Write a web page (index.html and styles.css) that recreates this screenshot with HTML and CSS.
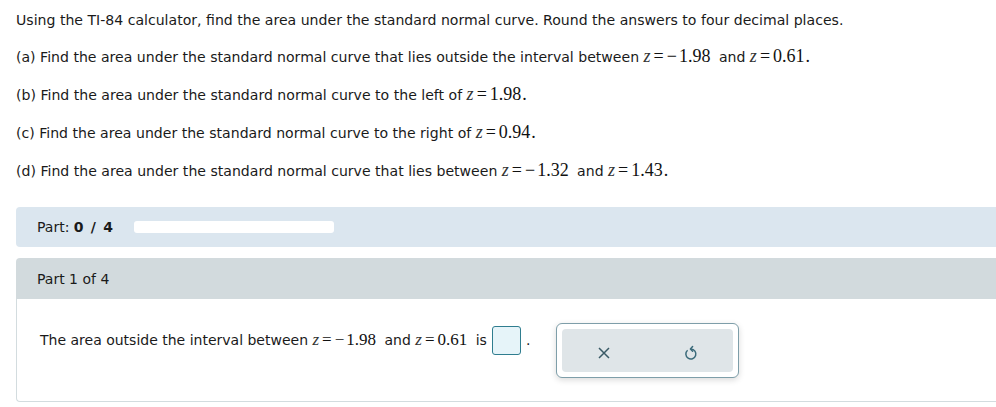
FILE: index.html
```html
<!DOCTYPE html>
<html>
<head>
<meta charset="utf-8">
<link rel="stylesheet" href="styles.css">
</head>
<body>
<div class="page">
  <div class="question">
    <p class="q-line first">Using the TI-84 calculator, find the area under the standard normal curve. Round the answers to four decimal places.</p>
    <p class="q-line">(a) Find the area under the standard normal curve that lies outside the interval between <span class="m sp"><i>z</i><span class="eq">=</span><span class="neg">−</span>1.98</span> and <span class="m"><i>z</i><span class="eq">=</span>0.61</span><span class="m end">.</span></p>
    <p class="q-line">(b) Find the area under the standard normal curve to the left of <span class="m"><i>z</i><span class="eq">=</span>1.98</span><span class="m end">.</span></p>
    <p class="q-line">(c) Find the area under the standard normal curve to the right of <span class="m"><i>z</i><span class="eq">=</span>0.94</span><span class="m end">.</span></p>
    <p class="q-line">(d) Find the area under the standard normal curve that lies between <span class="m sp"><i>z</i><span class="eq">=</span><span class="neg">−</span>1.32</span> and <span class="m"><i>z</i><span class="eq">=</span>1.43</span><span class="m end">.</span></p>
  </div>

  <div class="part-bar">
    <span class="part-label">Part: <b>0 / 4</b></span>
    <div class="progress"></div>
  </div>

  <div class="part-card">
    <div class="part-head">Part 1 of 4</div>
    <div class="part-body">
      <div class="answer-line">
        <span>The area outside the interval between <span class="m sp"><i>z</i><span class="eq">=</span><span class="neg">−</span>1.98</span> and <span class="m sp"><i>z</i><span class="eq">=</span>0.61</span> is</span>
        <span class="input-box"></span>
        <span class="dot">.</span>
      </div>
      <div class="tools">
        <div class="tools-inner">
          <svg class="ico" width="14" height="14" viewBox="0 0 14 14"><path d="M2 2 L12 12 M12 2 L2 12" stroke="#3a5a66" stroke-width="1.5" fill="none"/></svg>
          <svg class="ico" width="16" height="16" viewBox="0 0 16 16"><path d="M4.6 5.2 A5 5 0 1 0 8 4" stroke="#3a6a7a" stroke-width="1.5" fill="none"/><path d="M9.6 1.6 L7.4 4 L9.6 6.2" stroke="#3a6a7a" stroke-width="1.5" fill="none" stroke-linecap="round" stroke-linejoin="round"/></svg>
        </div>
      </div>
    </div>
  </div>
</div>
</body>
</html>
```

FILE: styles.css
```css
html, body {
  margin: 0;
  padding: 0;
  background: #fff;
}
body {
  font-family: "DejaVu Sans", Verdana, sans-serif;
  font-size: 14px;
  color: #1a1a1a;
  width: 996px;
  overflow: hidden;
}
.page {
  padding: 11px 0 0 16px;
}
.question {
  display: flex;
  flex-direction: column;
  font-size: 14.08px;
}
.q-line {
  margin: 0;
  height: 38px;
  line-height: 18px;
}
.q-line.first {
  height: 36px;
}
.m {
  font-family: "Liberation Serif", "Times New Roman", serif;
  font-size: 17px;
  color: #111;
}
.question .m {
  font-size: 18px;
}
.question .m.end {
  margin-left: 1px;
}
.m i {
  color: #333;
}
.m.sp {
  margin-right: 4px;
}
.eq {
  margin: 0 3px 0 3px;
}
.neg {
  margin-right: 2px;
}
.part-bar {
  margin-top: 8px;
  height: 40px;
  width: 1000px;
  background: #dbe6ef;
  border-radius: 4px 0 0 4px;
  display: flex;
  align-items: center;
  padding-left: 21px;
  box-sizing: border-box;
}
.part-label {
  width: 97px;
}
.part-label b {
  letter-spacing: 1.2px;
}
.progress {
  width: 200px;
  height: 12px;
  background: #fff;
  border-radius: 3px;
}
.part-card {
  margin-top: 11px;
  width: 1000px;
}
.part-head {
  height: 41px;
  background: #d2dadd;
  border-radius: 4px 0 0 0;
  padding-left: 21px;
  display: flex;
  align-items: center;
}
.part-body {
  height: 103px;
  border-left: 1px solid #d3dcdf;
  border-bottom: 1px solid #d3dcdf;
  border-radius: 0 0 0 4px;
  display: flex;
  align-items: flex-start;
  padding: 24px 0 0 23px;
  box-sizing: border-box;
}
.answer-line {
  display: flex;
  align-items: center;
  height: 30px;
  margin-top: 2px;
}
.input-box {
  display: inline-block;
  width: 27px;
  height: 27px;
  border: 1px solid #2f7d8f;
  background: #e6f4f9;
  border-radius: 3px;
  margin-left: 5px;
}
.dot {
  margin-left: 5px;
}
.tools {
  margin-left: 26px;
  width: 183px;
  height: 55px;
  border: 1px solid #7e9ea9;
  border-radius: 6px;
  box-sizing: border-box;
  padding: 5px;
  box-shadow: 0 2px 6px rgba(0, 0, 0, 0.15);
  background: #fff;
}
.tools-inner {
  height: 100%;
  background: #dfe5e8;
  border-radius: 4px;
  display: flex;
  align-items: center;
  justify-content: space-between;
  padding: 4px 34px 0 35px;
  box-sizing: border-box;
}
.ico {
  display: block;
}
```
